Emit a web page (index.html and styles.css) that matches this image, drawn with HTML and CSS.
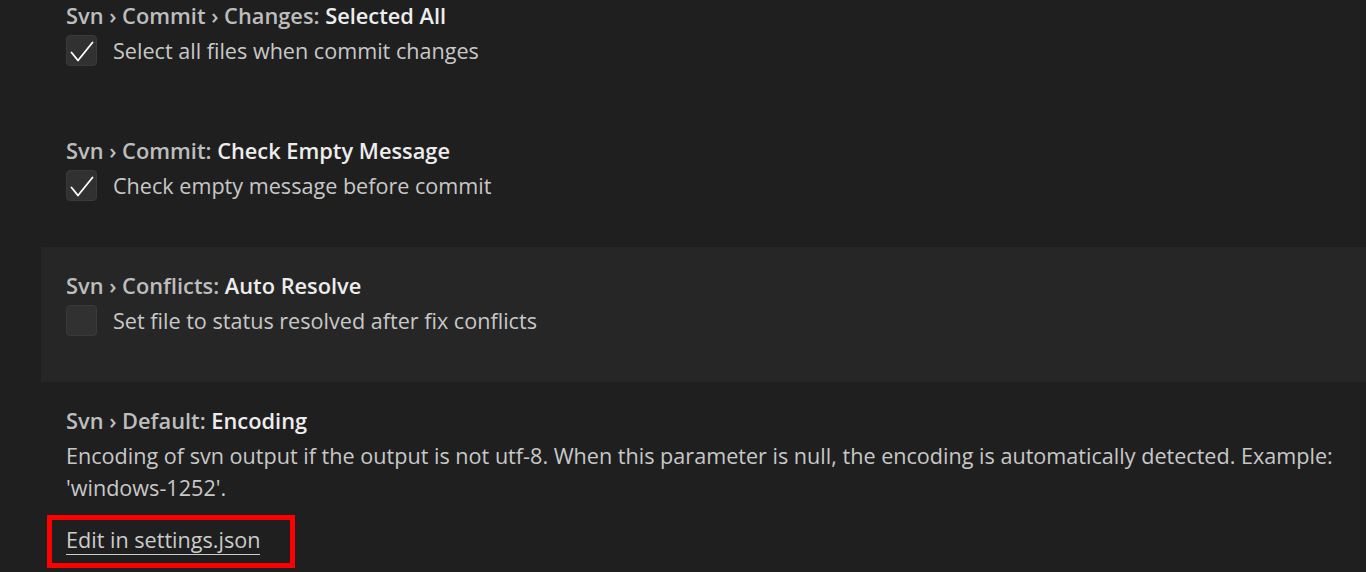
FILE: index.html
```html
<!DOCTYPE html>
<html lang="en">
<head>
<meta charset="utf-8">
<title>Settings</title>
<link rel="stylesheet" href="styles.css">
</head>
<body>
<div class="settings">
  <div class="item first">
    <div class="title"><span class="cat">Svn › Commit › Changes: </span><span class="label">Selected All</span></div>
    <div class="bool-row">
      <span class="checkbox checked"><svg viewBox="0 0 31 31" width="31" height="31"><path d="M5.5 17.5 L12 25.5 L26.5 7.5" fill="none" stroke="#ffffff" stroke-width="1.8" stroke-linecap="round" stroke-linejoin="round"/></svg></span>
      <span class="desc">Select all files when commit changes</span>
    </div>
  </div>
  <div class="item">
    <div class="title"><span class="cat">Svn › Commit: </span><span class="label">Check Empty Message</span></div>
    <div class="bool-row">
      <span class="checkbox checked"><svg viewBox="0 0 31 31" width="31" height="31"><path d="M5.5 17.5 L12 25.5 L26.5 7.5" fill="none" stroke="#ffffff" stroke-width="1.8" stroke-linecap="round" stroke-linejoin="round"/></svg></span>
      <span class="desc">Check empty message before commit</span>
    </div>
  </div>
  <div class="item hover">
    <div class="title"><span class="cat">Svn › Conflicts: </span><span class="label">Auto Resolve</span></div>
    <div class="bool-row">
      <span class="checkbox"></span>
      <span class="desc">Set file to status resolved after fix conflicts</span>
    </div>
  </div>
  <div class="item last">
    <div class="title"><span class="cat">Svn › Default: </span><span class="label">Encoding</span></div>
    <div class="desc block">Encoding of svn output if the output is not utf-8. When this parameter is null, the encoding is automatically detected. Example: 'windows-1252'.</div>
    <div class="edit-row"><a class="edit-link" href="#">Edit in settings.json</a></div>
  </div>
</div>
<div class="highlight"></div>
</body>
</html>
```
FILE: styles.css
```css
html, body {
  margin: 0;
  padding: 0;
  height: 100%;
  overflow: hidden;
}
body {
  background: #1f1f1f;
  font-family: "Open Sans", "Noto Sans", sans-serif;
  font-size: 21.6px;
  color: #c8c8c8;
  position: relative;
}
.settings {
  margin-left: 41px;
  margin-top: -23px;
}
.item {
  padding: 25px 25px 45px 25px;
  height: 135px;
  box-sizing: border-box;
}
.item.hover {
  background: #262626;
}
.item.last {
  height: auto;
  padding-bottom: 0;
}
.title {
  height: 28px;
  line-height: 28px;
  font-size: 21.8px;
  font-weight: 600;
  white-space: nowrap;
}
.cat {
  color: #bdbdbd;
}
.label {
  color: #ededed;
}
.bool-row {
  display: flex;
  align-items: flex-start;
  margin-top: 5px;
  gap: 16px;
}
.checkbox {
  flex: none;
  width: 31px;
  height: 31px;
  box-sizing: border-box;
  margin-top: 0;
  background: #313131;
  border: 1px solid #3a3a3a;
  border-radius: 4px;
  position: relative;
}
.checkbox svg {
  position: absolute;
  left: -1px;
  top: -1px;
}
.desc {
  line-height: 32px;
  color: #c8c8c8;
}
.desc.block {
  margin-top: 5px;
}
.edit-row {
  margin-top: 20px;
  line-height: 32px;
}
.edit-link {
  color: #cccccc;
  text-decoration: none;
  border-bottom: 1.5px solid #cccccc;
}
.highlight {
  position: absolute;
  left: 47px;
  top: 515px;
  width: 248px;
  height: 53px;
  box-sizing: border-box;
  border: 5px solid #ff0000;
  pointer-events: none;
}
```
